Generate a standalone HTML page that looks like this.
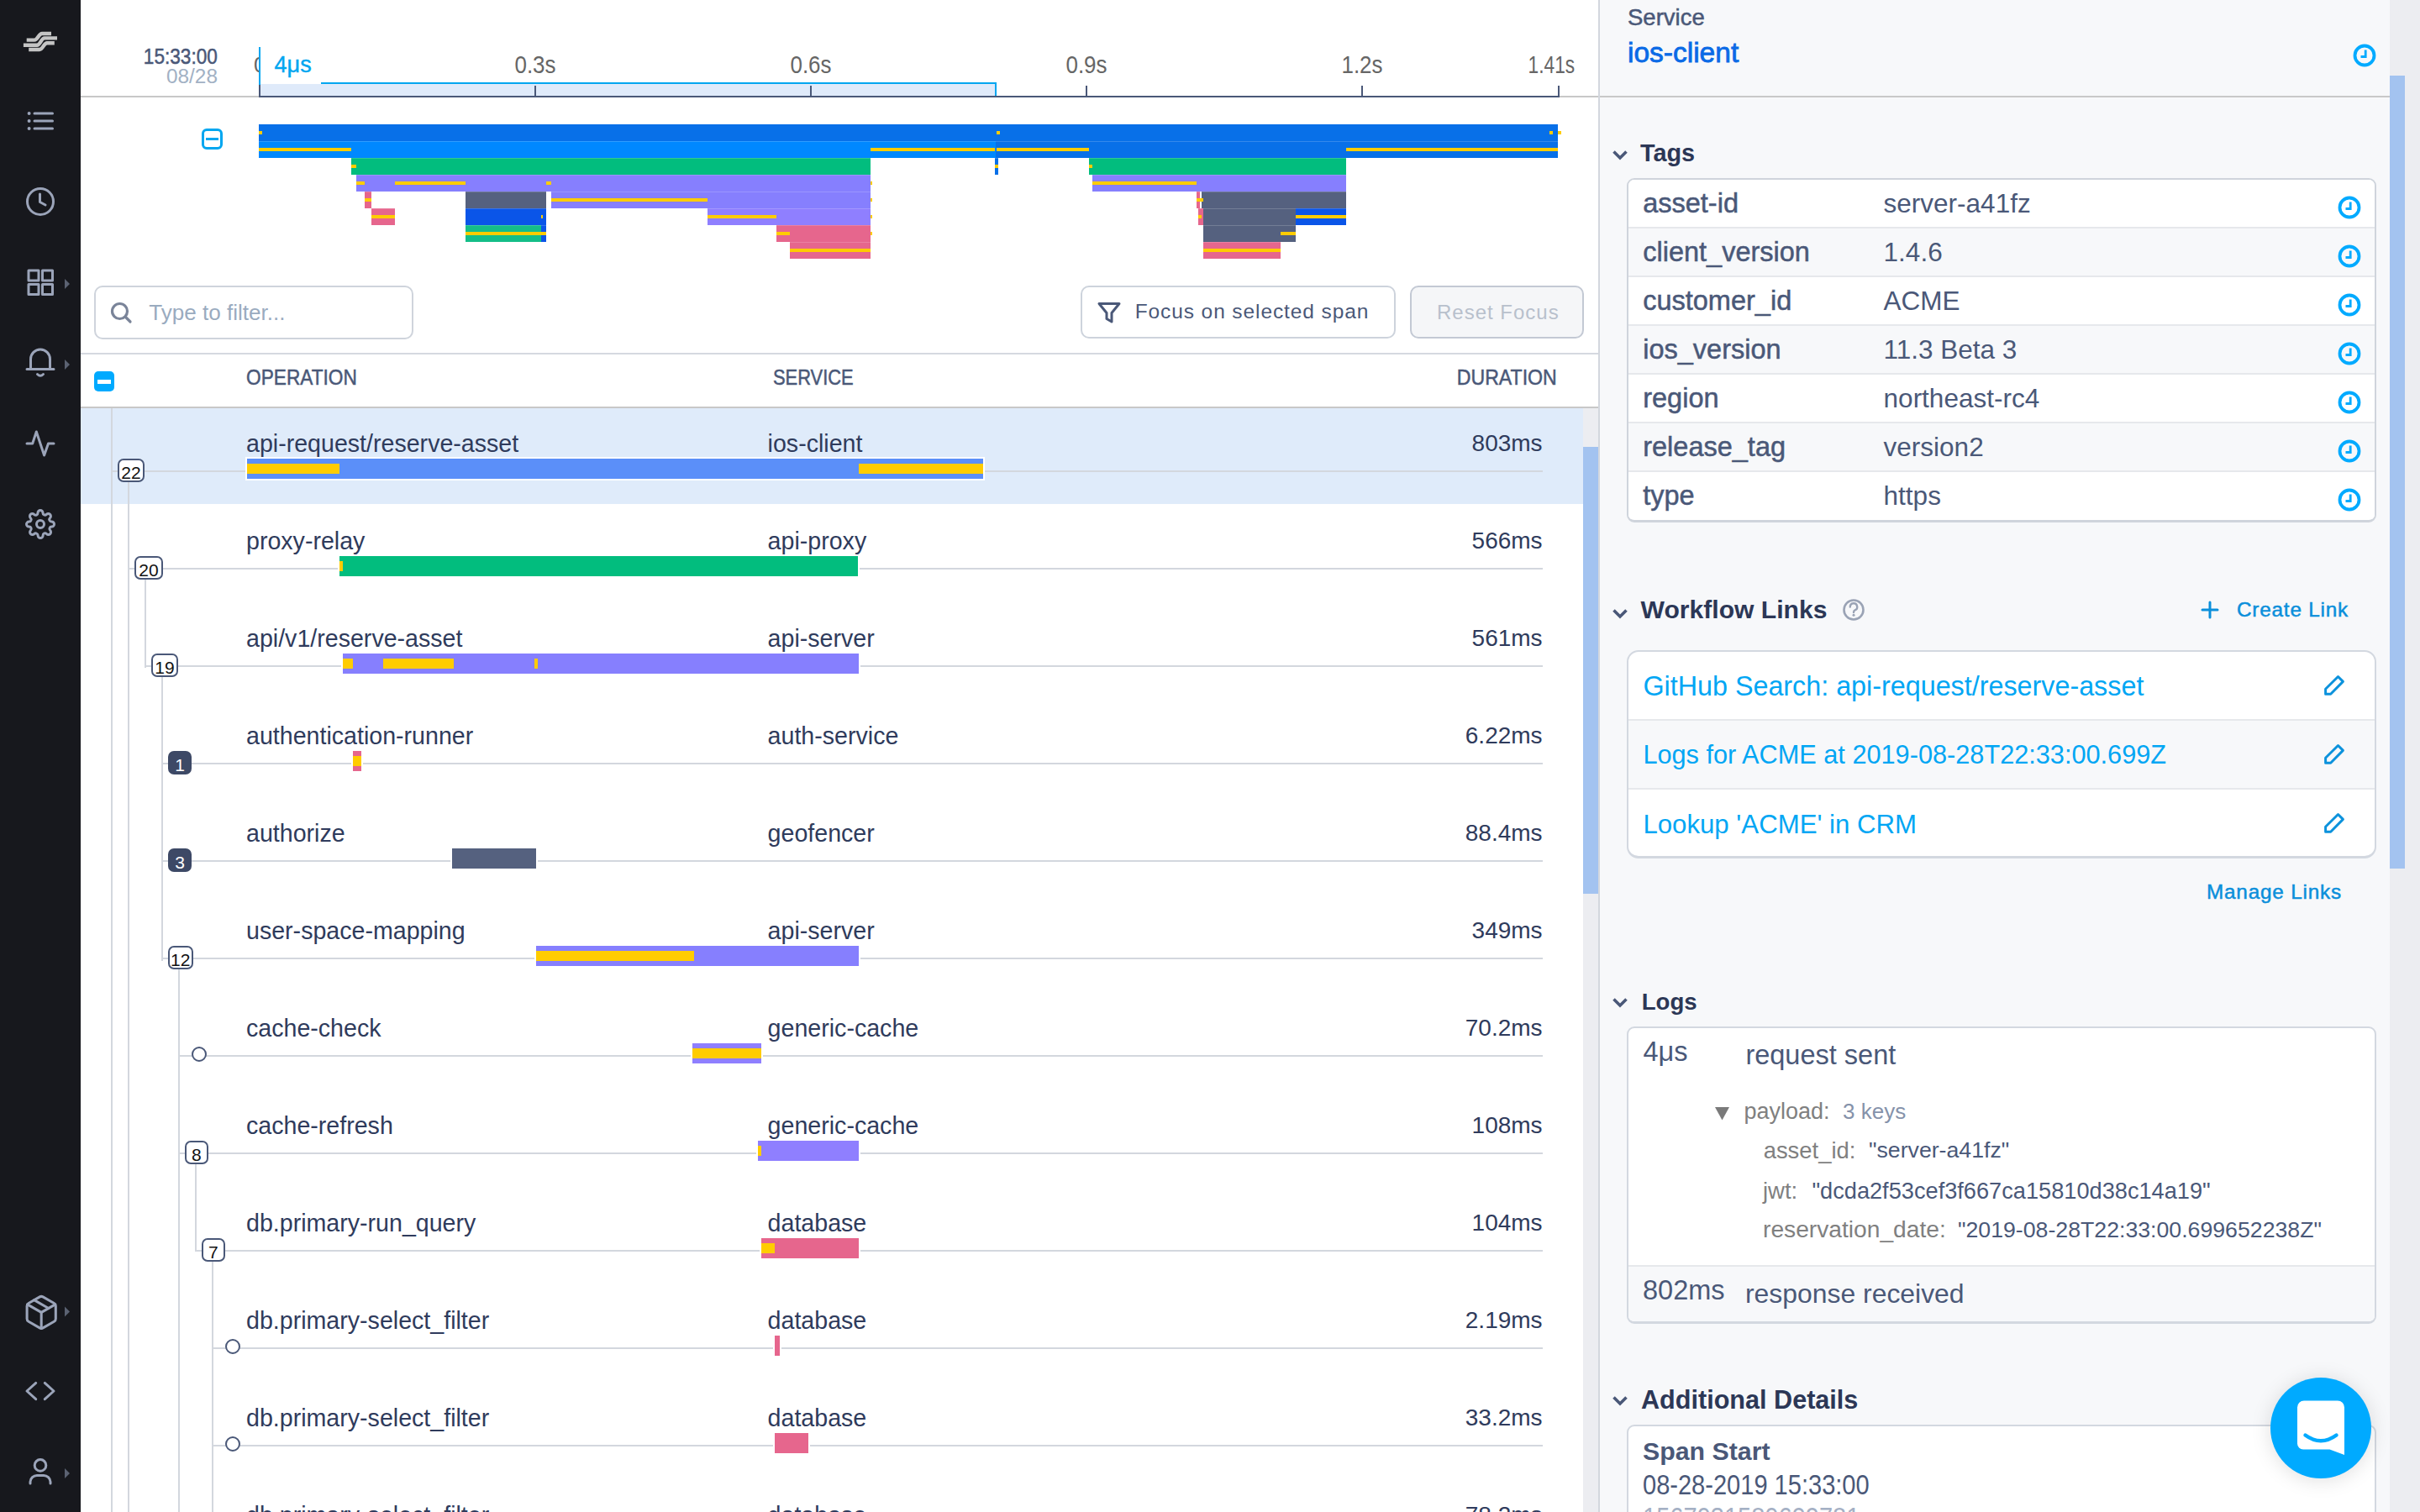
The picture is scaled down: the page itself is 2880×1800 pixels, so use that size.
<!DOCTYPE html>
<html><head><meta charset="utf-8"><title>Trace</title>
<style>
html,body{margin:0;padding:0;width:2880px;height:1800px;overflow:hidden;background:#fff;}
@media (max-width:2000px){html{zoom:0.5;}}
body{position:relative;font-family:"Liberation Sans", sans-serif;}
body div, body svg{position:absolute;box-sizing:content-box;}
.t{white-space:nowrap;line-height:1;}
.bdg{height:23.5px;border:2px solid #4a5878;border-radius:7px;background:#fff;color:#111;font-size:21px;line-height:30px;text-align:center;}
</style></head><body>
<div style="left:0px;top:0px;width:96px;height:1800px;background:#17181d;"></div><div style="left:96px;top:0px;width:1806px;height:1800px;background:#ffffff;"></div><div style="left:1902px;top:0px;width:2px;height:1800px;background:#d3d7de;"></div><div style="left:1904px;top:0px;width:940px;height:1800px;background:#f7f8fa;"></div><div style="left:2844px;top:0px;width:36px;height:1800px;background:#ecedf1;"></div><div style="left:2844px;top:90px;width:18px;height:944px;background:#a3c3f0;"></div><svg style="left:0;top:0" width="96" height="1800" viewBox="0 0 96 1800"><g fill="none" stroke="#c4c4c4" stroke-width="4.4"><path d="M31.7 47.6 H41 C45 47.6 46 40 50 40 H61"/><path d="M27.9 53.7 H44 C48 53.7 49 45.4 53 45.4 H68"/><path d="M34.2 59 H47 C51 59 52 51.2 56 51.2 H64.8"/></g><g fill="none" stroke="#9ba4b9" stroke-width="3" stroke-linecap="round" stroke-linejoin="round"><path d="M41 135 H62.5 M41 144 H62.5 M41 153 H62.5"/><circle cx="48" cy="240" r="15.5"/><path d="M47.5 231 V240.5 L54 244"/><rect x="34" y="322" width="12" height="12" stroke-linecap="butt"/><rect x="50.5" y="322" width="12" height="12"/><rect x="34" y="338.5" width="12" height="12"/><rect x="50.5" y="338.5" width="12" height="12"/><path d="M32 439.5 H64 M36.5 439.5 V427.5 A11.5 11.5 0 0 1 59.5 427.5 V439.5 M44.5 445.5 Q48 449 51.5 445.5"/><path d="M32 528 H38.7 L43.3 514 L52.6 542 L57.5 528 H64"/><path d="M42.7 1646.4 L32 1656 L42.7 1665.7 M53.3 1646.4 L64 1656 L53.3 1665.7"/><circle cx="48" cy="1744.4" r="6.8"/><path d="M36 1766 V1764 A8 8 0 0 1 44 1756.5 H52 A8 8 0 0 1 60 1764 V1766"/></g><g fill="#9ba4b9"><circle cx="34.6" cy="135" r="2"/><circle cx="34.6" cy="144" r="2"/><circle cx="34.6" cy="153" r="2"/></g><g transform="translate(30,606) scale(1.5)" fill="none" stroke="#9ba4b9" stroke-width="2" stroke-linecap="round" stroke-linejoin="round"><circle cx="12" cy="12" r="3"/><path d="M19.4 15a1.650 1.65 0 0 0 .33 1.82l.06.06a2 2 0 0 1 0 2.83 2 2 0 0 1-2.830 0l-.06-.06a1.65 1.65 0 0 0-1.82-.33 1.65 1.65 0 0 0-1 1.51V21a2 2 0 0 1-2 2 2 2 0 0 1-2-2v-.09A1.65 1.65 0 0 0 9 19.4a1.65 1.65 0 0 0-1.82.33l-.06.06a2 2 0 0 1-2.83 0 2 2 0 0 1 0-2.83l.06-.06a1.65 1.65 0 0 0 .33-1.82 1.65 1.65 0 0 0-1.51-1H3a2 2 0 0 1-2-2 2 2 0 0 1 2-2h.09A1.65 1.65 0 0 0 4.6 9a1.65 1.65 0 0 0-.33-1.82l-.06-.06a2 2 0 0 1 0-2.83 2 2 0 0 1 2.83 0l.06.06a1.65 1.65 0 0 0 1.82.33H9a1.65 1.65 0 0 0 1-1.51V3a2 2 0 0 1 2-2 2 2 0 0 1 2 2v.09a1.65 1.650 0 0 0 1 1.51 1.65 1.65 0 0 0 1.82-.33l.06-.06a2 2 0 0 1 2.83 0 2 2 0 0 1 0 2.83l-.06.06a1.65 1.65 0 0 0-.33 1.82V9a1.65 1.65 0 0 0 1.51 1H21a2 2 0 0 1 2 2 2 2 0 0 1-2 2h-.09a1.65 1.65 0 0 0-1.51 1z"/></g><g transform="translate(26.4,1539.6) scale(1.9)" fill="none" stroke="#9ba4b9" stroke-width="1.6" stroke-linecap="round" stroke-linejoin="round"><line x1="16.5" y1="9.4" x2="7.5" y2="4.21"/><path d="M21 16V8a2 2 0 0 0-1-1.73l-7-4a2 2 0 0 0-2 0l-7 4A2 2 0 0 0 3 8v8a2 2 0 0 0 1 1.73l7 4a2 2 0 0 0 2 0l7-4A2 2 0 0 0 21 16z"/><polyline points="3.27 6.96 12 12.01 20.73 6.96"/><line x1="12" y1="22.08" x2="12" y2="12"/></g><path d="M77 332 L83 338 L77 344 Z" fill="#5b6272"/><path d="M77 428 L83 434 L77 440 Z" fill="#5b6272"/><path d="M77 1555.5 L83 1561.5 L77 1567.5 Z" fill="#5b6272"/><path d="M77 1748 L83 1754 L77 1760 Z" fill="#5b6272"/></svg><div class="t" style="right:2621px;top:54.9px;font-size:25.4px;color:#4a5878;transform:scaleX(0.89);transform-origin:right center;-webkit-text-stroke:0.5px #4a5878;">15:33:00</div><div class="t" style="right:2621px;top:79.35px;font-size:24.4px;color:#a2b1c4;">08/28</div><div style="left:96px;top:114px;width:212px;height:2px;background:#c8c8c8;"></div><div style="left:1856px;top:114px;width:46px;height:2px;background:#c8c8c8;"></div><div style="left:1904px;top:114px;width:940px;height:2px;background:#c8c8c8;"></div><div style="left:308px;top:100px;width:876px;height:14px;background:#dfeafa;"></div><div style="left:382px;top:98px;width:804px;height:2px;background:#00a6f0;"></div><div style="left:1184px;top:98px;width:2px;height:16px;background:#00a6f0;"></div><div style="left:308px;top:114px;width:1548px;height:2px;background:#4a5878;"></div><div style="left:308px;top:56px;width:2px;height:45px;background:#00a6f0;"></div><div style="left:308px;top:101px;width:2px;height:15px;background:#4a5878;"></div><div class="t" style="left:302px;top:64.49px;font-size:26px;color:#666666;width:6px;overflow:hidden;">0</div><div class="t" style="left:326.6px;top:63.64px;font-size:27px;color:#00a6f0;-webkit-text-stroke:0.4px #00a6f0;">4μs</div><div style="left:636px;top:102px;width:2px;height:12px;background:#4a5878;"></div><div class="t" style="left:576.7px;width:120px;text-align:center;top:61.53px;font-size:29.5px;color:#666666;transform:scaleX(0.88)">0.3s</div><div style="left:964px;top:102px;width:2px;height:12px;background:#4a5878;"></div><div class="t" style="left:904.8px;width:120px;text-align:center;top:61.53px;font-size:29.5px;color:#666666;transform:scaleX(0.88)">0.6s</div><div style="left:1292px;top:102px;width:2px;height:12px;background:#4a5878;"></div><div class="t" style="left:1232.9px;width:120px;text-align:center;top:61.53px;font-size:29.5px;color:#666666;transform:scaleX(0.88)">0.9s</div><div style="left:1620px;top:102px;width:2px;height:12px;background:#4a5878;"></div><div class="t" style="left:1560.8px;width:120px;text-align:center;top:61.53px;font-size:29.5px;color:#666666;transform:scaleX(0.88)">1.2s</div><div style="left:1854px;top:102px;width:2px;height:12px;background:#4a5878;"></div><div class="t" style="right:1006px;top:61.53px;font-size:29.5px;color:#666666;transform:scaleX(0.77);transform-origin:right center;">1.41s</div><div style="left:240px;top:153px;width:19px;height:19px;border:3px solid #00a6f0;border-radius:6px"></div><div style="left:245px;top:164px;width:15px;height:3px;background:#00a6f0;"></div><div style="left:308px;top:148px;width:1546px;height:20px;background:#0870e8;"></div><div style="left:308px;top:156px;width:4px;height:4px;background:#ffcc00;"></div><div style="left:1186px;top:156px;width:4px;height:4px;background:#ffcc00;"></div><div style="left:1844px;top:156px;width:4px;height:4px;background:#ffcc00;"></div><div style="left:1854px;top:156px;width:4px;height:4px;background:#ffcc00;"></div><div style="left:308px;top:168px;width:877px;height:20px;background:#0088ff;box-shadow:inset 0 1px 0 rgba(255,255,255,0.18);"></div><div style="left:1185px;top:168px;width:669px;height:20px;background:#0870e8;box-shadow:inset 0 1px 0 rgba(255,255,255,0.18);"></div><div style="left:308px;top:176px;width:110px;height:4px;background:#ffcc00;"></div><div style="left:1036px;top:176px;width:148px;height:4px;background:#ffcc00;"></div><div style="left:1186px;top:176px;width:110px;height:4px;background:#ffcc00;"></div><div style="left:1602px;top:176px;width:252px;height:4px;background:#ffcc00;"></div><div style="left:418px;top:188px;width:618px;height:20px;background:#02bd7e;box-shadow:inset 0 1px 0 rgba(255,255,255,0.18);"></div><div style="left:1184px;top:188px;width:4px;height:20px;background:#0870e8;box-shadow:inset 0 1px 0 rgba(255,255,255,0.18);"></div><div style="left:1296px;top:188px;width:306px;height:20px;background:#02bd7e;box-shadow:inset 0 1px 0 rgba(255,255,255,0.18);"></div><div style="left:418px;top:196px;width:6px;height:4px;background:#ffcc00;"></div><div style="left:1184px;top:196px;width:4px;height:4px;background:#ffcc00;"></div><div style="left:1296px;top:196px;width:4px;height:4px;background:#ffcc00;"></div><div style="left:424px;top:208px;width:612px;height:20px;background:#867ffe;box-shadow:inset 0 1px 0 rgba(255,255,255,0.18);"></div><div style="left:1300px;top:208px;width:302px;height:20px;background:#867ffe;box-shadow:inset 0 1px 0 rgba(255,255,255,0.18);"></div><div style="left:424px;top:216px;width:10px;height:4px;background:#ffcc00;"></div><div style="left:470px;top:216px;width:84px;height:4px;background:#ffcc00;"></div><div style="left:650px;top:216px;width:6px;height:4px;background:#ffcc00;"></div><div style="left:1036px;top:216px;width:2px;height:4px;background:#ffcc00;"></div><div style="left:1300px;top:216px;width:124px;height:4px;background:#ffcc00;"></div><div style="left:434px;top:228px;width:8px;height:20px;background:#e6668d;box-shadow:inset 0 1px 0 rgba(255,255,255,0.18);"></div><div style="left:554px;top:228px;width:96px;height:20px;background:#55617f;box-shadow:inset 0 1px 0 rgba(255,255,255,0.18);"></div><div style="left:656px;top:228px;width:380px;height:20px;background:#867ffe;box-shadow:inset 0 1px 0 rgba(255,255,255,0.18);"></div><div style="left:1424px;top:228px;width:4px;height:20px;background:#e6668d;box-shadow:inset 0 1px 0 rgba(255,255,255,0.18);"></div><div style="left:1430px;top:228px;width:172px;height:20px;background:#55617f;box-shadow:inset 0 1px 0 rgba(255,255,255,0.18);"></div><div style="left:434px;top:236px;width:8px;height:4px;background:#ffcc00;"></div><div style="left:656px;top:236px;width:186px;height:4px;background:#ffcc00;"></div><div style="left:1036px;top:236px;width:2px;height:4px;background:#ffcc00;"></div><div style="left:1424px;top:236px;width:8px;height:4px;background:#ffcc00;"></div><div style="left:442px;top:248px;width:28px;height:20px;background:#e6668d;box-shadow:inset 0 1px 0 rgba(255,255,255,0.18);"></div><div style="left:554px;top:248px;width:96px;height:20px;background:#0a55e8;box-shadow:inset 0 1px 0 rgba(255,255,255,0.18);"></div><div style="left:842px;top:248px;width:194px;height:20px;background:#8f7fff;box-shadow:inset 0 1px 0 rgba(255,255,255,0.18);"></div><div style="left:1426px;top:248px;width:6px;height:20px;background:#e6668d;box-shadow:inset 0 1px 0 rgba(255,255,255,0.18);"></div><div style="left:1432px;top:248px;width:110px;height:20px;background:#55617f;box-shadow:inset 0 1px 0 rgba(255,255,255,0.18);"></div><div style="left:1542px;top:248px;width:60px;height:20px;background:#0a55e8;box-shadow:inset 0 1px 0 rgba(255,255,255,0.18);"></div><div style="left:442px;top:256px;width:28px;height:4px;background:#ffcc00;"></div><div style="left:644px;top:256px;width:2px;height:4px;background:#ffcc00;"></div><div style="left:842px;top:256px;width:82px;height:4px;background:#ffcc00;"></div><div style="left:1036px;top:256px;width:2px;height:4px;background:#ffcc00;"></div><div style="left:1426px;top:256px;width:4px;height:4px;background:#ffcc00;"></div><div style="left:1542px;top:256px;width:60px;height:4px;background:#ffcc00;"></div><div style="left:554px;top:268px;width:90px;height:20px;background:#14be88;box-shadow:inset 0 1px 0 rgba(255,255,255,0.18);"></div><div style="left:644px;top:268px;width:6px;height:20px;background:#0a55e8;box-shadow:inset 0 1px 0 rgba(255,255,255,0.18);"></div><div style="left:924px;top:268px;width:112px;height:20px;background:#e6668d;box-shadow:inset 0 1px 0 rgba(255,255,255,0.18);"></div><div style="left:1432px;top:268px;width:110px;height:20px;background:#55617f;box-shadow:inset 0 1px 0 rgba(255,255,255,0.18);"></div><div style="left:554px;top:276px;width:96px;height:4px;background:#ffcc00;"></div><div style="left:924px;top:276px;width:16px;height:4px;background:#ffcc00;"></div><div style="left:1036px;top:276px;width:2px;height:4px;background:#ffcc00;"></div><div style="left:1524px;top:276px;width:18px;height:4px;background:#ffcc00;"></div><div style="left:940px;top:288px;width:96px;height:20px;background:#e6668d;box-shadow:inset 0 1px 0 rgba(255,255,255,0.18);"></div><div style="left:1432px;top:288px;width:92px;height:20px;background:#e6668d;box-shadow:inset 0 1px 0 rgba(255,255,255,0.18);"></div><div style="left:940px;top:296px;width:96px;height:4px;background:#ffcc00;"></div><div style="left:1432px;top:296px;width:92px;height:4px;background:#ffcc00;"></div><div style="left:112px;top:340px;width:376px;height:60px;border:2px solid #cfd4dc;border-radius:10px;background:#fff"></div><svg style="left:128px;top:356px" width="32" height="32" viewBox="128 356 32 32"><g fill="none" stroke="#7a8499" stroke-width="3.2" stroke-linecap="round"><circle cx="142.5" cy="370.5" r="9"/><path d="M149.5 377.5 L155 383"/></g></svg><div class="t" style="left:177.2px;top:358.61px;font-size:26.1px;color:#9aabbf;">Type to filter...</div><div style="left:1286px;top:340px;width:371px;height:59px;border:2px solid #cdd3dc;border-radius:10px;background:#fff"></div><svg style="left:1300px;top:354px" width="40" height="36" viewBox="1300 354 40 36"><path d="M1308 361.5 H1332 L1323 372.5 V383 L1317 379.5 V372.5 Z" fill="none" stroke="#4a5878" stroke-width="3" stroke-linejoin="round"/></svg><div class="t" style="left:1350.7px;top:359.26px;font-size:24.5px;color:#4a5878;letter-spacing:0.9px;">Focus on selected span</div><div style="left:1678px;top:340px;width:203px;height:59px;border:2px solid #c3c9d4;border-radius:10px;background:#f5f6f8"></div><div class="t" style="left:1710px;top:359.68px;font-size:24px;color:#b8c0cc;letter-spacing:1.0px;">Reset Focus</div><div style="left:96px;top:420px;width:1806px;height:2px;background:#d5d9e0;"></div><div style="left:112px;top:442px;width:24px;height:24px;border-radius:5px;background:#00aaff"></div><div style="left:116px;top:452px;width:16px;height:5px;background:#ffffff;"></div><div class="t" style="left:292.6px;top:437.3px;font-size:25.4px;color:#4a5878;transform:scaleX(0.893);transform-origin:left center;-webkit-text-stroke:0.5px #4a5878;">OPERATION</div><div class="t" style="left:919.8px;top:437.3px;font-size:25.4px;color:#4a5878;transform:scaleX(0.862);transform-origin:left center;-webkit-text-stroke:0.5px #4a5878;">SERVICE</div><div class="t" style="right:1027px;top:437.3px;font-size:25.4px;color:#4a5878;transform:scaleX(0.91);transform-origin:right center;-webkit-text-stroke:0.5px #4a5878;">DURATION</div><div style="left:96px;top:484px;width:1806px;height:2px;background:#c8c8c8;"></div><div style="left:96px;top:486px;width:1788px;height:114px;background:#dfebfa;"></div><div style="left:132px;top:486px;width:2px;height:1314px;background:#d3d7de;"></div><div style="left:152px;top:574px;width:2px;height:1226px;background:#d3d7de;"></div><div style="left:172px;top:690px;width:2px;height:105px;background:#d3d7de;"></div><div style="left:192px;top:805px;width:2px;height:339px;background:#d3d7de;"></div><div style="left:212px;top:1153px;width:2px;height:647px;background:#d3d7de;"></div><div style="left:232px;top:1385px;width:2px;height:105px;background:#d3d7de;"></div><div style="left:252px;top:1501px;width:2px;height:299px;background:#d3d7de;"></div><div style="left:132px;top:560px;width:1704px;height:2px;background:#d3d7de;"></div><div class="bdg" style="left:140px;top:546px;width:28px">22</div><div style="left:294px;top:546px;width:876px;height:24px;background:#5b8ff9;box-shadow:0 0 0 2px #fff;"></div><div style="left:294px;top:552px;width:110px;height:12px;background:#ffcc00;"></div><div style="left:1022px;top:552px;width:148px;height:12px;background:#ffcc00;"></div><div class="t" style="left:293px;top:513.79px;font-size:28.6px;color:#2f3b5c;">api-request/reserve-asset</div><div class="t" style="left:913.6px;top:513.79px;font-size:28.6px;color:#2f3b5c;">ios-client</div><div class="t" style="right:1044.4px;top:514.3px;font-size:28px;color:#2f3b5c;">803ms</div><div style="left:152px;top:676px;width:1684px;height:2px;background:#d3d7de;"></div><div class="bdg" style="left:160px;top:662px;width:30px">20</div><div style="left:404px;top:662px;width:617px;height:24px;background:#02bd7e;box-shadow:0 0 0 2px #fff;"></div><div style="left:404px;top:668px;width:4px;height:12px;background:#ffcc00;"></div><div class="t" style="left:293px;top:629.79px;font-size:28.6px;color:#2f3b5c;">proxy-relay</div><div class="t" style="left:913.6px;top:629.79px;font-size:28.6px;color:#2f3b5c;">api-proxy</div><div class="t" style="right:1044.4px;top:630.3px;font-size:28px;color:#2f3b5c;">566ms</div><div style="left:172px;top:792px;width:1664px;height:2px;background:#d3d7de;"></div><div class="bdg" style="left:180px;top:778px;width:28px">19</div><div style="left:408px;top:778px;width:614px;height:24px;background:#867ffe;box-shadow:0 0 0 2px #fff;"></div><div style="left:408px;top:784px;width:12px;height:12px;background:#ffcc00;"></div><div style="left:456px;top:784px;width:84px;height:12px;background:#ffcc00;"></div><div style="left:636px;top:784px;width:4px;height:12px;background:#ffcc00;"></div><div class="t" style="left:293px;top:745.79px;font-size:28.6px;color:#2f3b5c;">api/v1/reserve-asset</div><div class="t" style="left:913.6px;top:745.79px;font-size:28.6px;color:#2f3b5c;">api-server</div><div class="t" style="right:1044.4px;top:746.3px;font-size:28px;color:#2f3b5c;">561ms</div><div style="left:192px;top:908px;width:1644px;height:2px;background:#d3d7de;"></div><div class="bdg" style="left:200px;top:894px;width:24px;background:#3d4966;border-color:#3d4966;color:#fff">1</div><div style="left:420px;top:894px;width:10px;height:24px;background:#e6668d;box-shadow:0 0 0 2px #fff;"></div><div style="left:420px;top:900px;width:10px;height:12px;background:#ffcc00;"></div><div class="t" style="left:293px;top:861.79px;font-size:28.6px;color:#2f3b5c;">authentication-runner</div><div class="t" style="left:913.6px;top:861.79px;font-size:28.6px;color:#2f3b5c;">auth-service</div><div class="t" style="right:1044.4px;top:862.3px;font-size:28px;color:#2f3b5c;">6.22ms</div><div style="left:192px;top:1024px;width:1644px;height:2px;background:#d3d7de;"></div><div class="bdg" style="left:200px;top:1010px;width:24px;background:#3d4966;border-color:#3d4966;color:#fff">3</div><div style="left:538px;top:1010px;width:100px;height:24px;background:#55617f;box-shadow:0 0 0 2px #fff;"></div><div class="t" style="left:293px;top:977.79px;font-size:28.6px;color:#2f3b5c;">authorize</div><div class="t" style="left:913.6px;top:977.79px;font-size:28.6px;color:#2f3b5c;">geofencer</div><div class="t" style="right:1044.4px;top:978.3px;font-size:28px;color:#2f3b5c;">88.4ms</div><div style="left:192px;top:1140px;width:1644px;height:2px;background:#d3d7de;"></div><div class="bdg" style="left:200px;top:1126px;width:25.5px">12</div><div style="left:638px;top:1126px;width:384px;height:24px;background:#867ffe;box-shadow:0 0 0 2px #fff;"></div><div style="left:638px;top:1132px;width:188px;height:12px;background:#ffcc00;"></div><div class="t" style="left:293px;top:1093.79px;font-size:28.6px;color:#2f3b5c;">user-space-mapping</div><div class="t" style="left:913.6px;top:1093.79px;font-size:28.6px;color:#2f3b5c;">api-server</div><div class="t" style="right:1044.4px;top:1094.3px;font-size:28px;color:#2f3b5c;">349ms</div><div style="left:212px;top:1256px;width:1624px;height:2px;background:#d3d7de;"></div><div style="left:228px;top:1246px;width:14px;height:14px;border:2px solid #4a5878;border-radius:50%;background:#fff"></div><div style="left:824px;top:1242px;width:82px;height:24px;background:#8f7fff;box-shadow:0 0 0 2px #fff;"></div><div style="left:824px;top:1248px;width:82px;height:12px;background:#ffcc00;"></div><div class="t" style="left:293px;top:1209.79px;font-size:28.6px;color:#2f3b5c;">cache-check</div><div class="t" style="left:913.6px;top:1209.79px;font-size:28.6px;color:#2f3b5c;">generic-cache</div><div class="t" style="right:1044.4px;top:1210.3px;font-size:28px;color:#2f3b5c;">70.2ms</div><div style="left:212px;top:1372px;width:1624px;height:2px;background:#d3d7de;"></div><div class="bdg" style="left:220px;top:1358px;width:23.5px">8</div><div style="left:902px;top:1358px;width:120px;height:24px;background:#8f7fff;box-shadow:0 0 0 2px #fff;"></div><div style="left:902px;top:1364px;width:4px;height:12px;background:#ffcc00;"></div><div class="t" style="left:293px;top:1325.79px;font-size:28.6px;color:#2f3b5c;">cache-refresh</div><div class="t" style="left:913.6px;top:1325.79px;font-size:28.6px;color:#2f3b5c;">generic-cache</div><div class="t" style="right:1044.4px;top:1326.3px;font-size:28px;color:#2f3b5c;">108ms</div><div style="left:232px;top:1488px;width:1604px;height:2px;background:#d3d7de;"></div><div class="bdg" style="left:240px;top:1474px;width:23.5px">7</div><div style="left:906px;top:1474px;width:116px;height:24px;background:#e6668d;box-shadow:0 0 0 2px #fff;"></div><div style="left:906px;top:1480px;width:16px;height:12px;background:#ffcc00;"></div><div class="t" style="left:293px;top:1441.79px;font-size:28.6px;color:#2f3b5c;">db.primary-run_query</div><div class="t" style="left:913.6px;top:1441.79px;font-size:28.6px;color:#2f3b5c;">database</div><div class="t" style="right:1044.4px;top:1442.3px;font-size:28px;color:#2f3b5c;">104ms</div><div style="left:252px;top:1604px;width:1584px;height:2px;background:#d3d7de;"></div><div style="left:267.5px;top:1594px;width:14px;height:14px;border:2px solid #4a5878;border-radius:50%;background:#fff"></div><div style="left:922px;top:1590px;width:6px;height:24px;background:#e6668d;box-shadow:0 0 0 2px #fff;"></div><div class="t" style="left:293px;top:1557.79px;font-size:28.6px;color:#2f3b5c;">db.primary-select_filter</div><div class="t" style="left:913.6px;top:1557.79px;font-size:28.6px;color:#2f3b5c;">database</div><div class="t" style="right:1044.4px;top:1558.3px;font-size:28px;color:#2f3b5c;">2.19ms</div><div style="left:252px;top:1720px;width:1584px;height:2px;background:#d3d7de;"></div><div style="left:267.5px;top:1710px;width:14px;height:14px;border:2px solid #4a5878;border-radius:50%;background:#fff"></div><div style="left:922px;top:1706px;width:40px;height:24px;background:#e6668d;box-shadow:0 0 0 2px #fff;"></div><div class="t" style="left:293px;top:1673.79px;font-size:28.6px;color:#2f3b5c;">db.primary-select_filter</div><div class="t" style="left:913.6px;top:1673.79px;font-size:28.6px;color:#2f3b5c;">database</div><div class="t" style="right:1044.4px;top:1674.3px;font-size:28px;color:#2f3b5c;">33.2ms</div><div style="left:252px;top:1836px;width:1584px;height:2px;background:#d3d7de;"></div><div style="left:267.5px;top:1826px;width:14px;height:14px;border:2px solid #4a5878;border-radius:50%;background:#fff"></div><div style="left:922px;top:1822px;width:84px;height:24px;background:#e6668d;box-shadow:0 0 0 2px #fff;"></div><div class="t" style="left:293px;top:1789.79px;font-size:28.6px;color:#2f3b5c;">db.primary-select_filter</div><div class="t" style="left:913.6px;top:1789.79px;font-size:28.6px;color:#2f3b5c;">database</div><div class="t" style="right:1044.4px;top:1790.3px;font-size:28px;color:#2f3b5c;">78.2ms</div><div style="left:1884px;top:486px;width:18px;height:1314px;background:#ecedf1;"></div><div style="left:1884px;top:532px;width:18px;height:532px;background:#a3c3f0;"></div><div class="t" style="left:1937px;top:7.32px;font-size:27.5px;color:#4a5878;-webkit-text-stroke:0.5px #4a5878;">Service</div><div class="t" style="left:1937px;top:45.94px;font-size:33.5px;color:#0a6ae6;-webkit-text-stroke:0.8px #0a6ae6;">ios-client</div><svg style="left:2799.3px;top:51.400000000000006px" width="30" height="30" viewBox="2799.3 51.400000000000006 30 30"><g fill="none" stroke="#00aaff" stroke-width="3.8"><circle cx="2814.3" cy="66.4" r="11.5"/><path d="M2815.5 59.900000000000006 V67.9 H2809.8" stroke-width="2.8"/></g></svg><svg style="left:1915px;top:172.5px" width="26" height="24" viewBox="1915 172.5 26 24"><path d="M1920.5 180.0 L1928 187.5 L1935.5 180.0" fill="none" stroke="#4a5878" stroke-width="3.6"/></svg><div class="t" style="left:1952px;top:167.62px;font-size:28.8px;color:#2c3756;font-weight:700;">Tags</div><div style="left:1936px;top:212px;width:888px;height:405px;border:2px solid #cfd4dc;border-bottom-width:3px;border-radius:9px;background:#fff;overflow:hidden"><div style="left:0;top:0px;width:888px;height:56px;background:#fff;box-sizing:border-box"></div><div style="left:0;top:56px;width:888px;height:58px;background:#f7f8fa;border-top:2px solid #e6e8ec;box-sizing:border-box"></div><div style="left:0;top:114px;width:888px;height:58px;background:#fff;border-top:2px solid #e6e8ec;box-sizing:border-box"></div><div style="left:0;top:172px;width:888px;height:58px;background:#f7f8fa;border-top:2px solid #e6e8ec;box-sizing:border-box"></div><div style="left:0;top:230px;width:888px;height:58px;background:#fff;border-top:2px solid #e6e8ec;box-sizing:border-box"></div><div style="left:0;top:288px;width:888px;height:58px;background:#f7f8fa;border-top:2px solid #e6e8ec;box-sizing:border-box"></div><div style="left:0;top:346px;width:888px;height:58px;background:#fff;border-top:2px solid #e6e8ec;box-sizing:border-box"></div></div><div class="t" style="left:1955.2px;top:226.19px;font-size:32.5px;color:#4a5878;-webkit-text-stroke:0.5px #4a5878;">asset-id</div><div class="t" style="left:2241.6px;top:227.04px;font-size:31.5px;color:#4a5878;">server-a41fz</div><svg style="left:2781px;top:231.5px" width="30" height="30" viewBox="2781 231.5 30 30"><g fill="none" stroke="#00aaff" stroke-width="3.8"><circle cx="2796" cy="246.5" r="11.5"/><path d="M2797.2 240.0 V248.0 H2791.5" stroke-width="2.8"/></g></svg><div class="t" style="left:1955.2px;top:284.19px;font-size:32.5px;color:#4a5878;-webkit-text-stroke:0.5px #4a5878;">client_version</div><div class="t" style="left:2241.6px;top:285.04px;font-size:31.5px;color:#4a5878;">1.4.6</div><svg style="left:2781px;top:289.5px" width="30" height="30" viewBox="2781 289.5 30 30"><g fill="none" stroke="#00aaff" stroke-width="3.8"><circle cx="2796" cy="304.5" r="11.5"/><path d="M2797.2 298.0 V306.0 H2791.5" stroke-width="2.8"/></g></svg><div class="t" style="left:1955.2px;top:342.19px;font-size:32.5px;color:#4a5878;-webkit-text-stroke:0.5px #4a5878;">customer_id</div><div class="t" style="left:2241.6px;top:343.04px;font-size:31.5px;color:#4a5878;">ACME</div><svg style="left:2781px;top:347.5px" width="30" height="30" viewBox="2781 347.5 30 30"><g fill="none" stroke="#00aaff" stroke-width="3.8"><circle cx="2796" cy="362.5" r="11.5"/><path d="M2797.2 356.0 V364.0 H2791.5" stroke-width="2.8"/></g></svg><div class="t" style="left:1955.2px;top:400.19px;font-size:32.5px;color:#4a5878;-webkit-text-stroke:0.5px #4a5878;">ios_version</div><div class="t" style="left:2241.6px;top:401.04px;font-size:31.5px;color:#4a5878;">11.3 Beta 3</div><svg style="left:2781px;top:405.5px" width="30" height="30" viewBox="2781 405.5 30 30"><g fill="none" stroke="#00aaff" stroke-width="3.8"><circle cx="2796" cy="420.5" r="11.5"/><path d="M2797.2 414.0 V422.0 H2791.5" stroke-width="2.8"/></g></svg><div class="t" style="left:1955.2px;top:458.19px;font-size:32.5px;color:#4a5878;-webkit-text-stroke:0.5px #4a5878;">region</div><div class="t" style="left:2241.6px;top:459.04px;font-size:31.5px;color:#4a5878;">northeast-rc4</div><svg style="left:2781px;top:463.5px" width="30" height="30" viewBox="2781 463.5 30 30"><g fill="none" stroke="#00aaff" stroke-width="3.8"><circle cx="2796" cy="478.5" r="11.5"/><path d="M2797.2 472.0 V480.0 H2791.5" stroke-width="2.8"/></g></svg><div class="t" style="left:1955.2px;top:516.19px;font-size:32.5px;color:#4a5878;-webkit-text-stroke:0.5px #4a5878;">release_tag</div><div class="t" style="left:2241.6px;top:517.04px;font-size:31.5px;color:#4a5878;">version2</div><svg style="left:2781px;top:521.5px" width="30" height="30" viewBox="2781 521.5 30 30"><g fill="none" stroke="#00aaff" stroke-width="3.8"><circle cx="2796" cy="536.5" r="11.5"/><path d="M2797.2 530.0 V538.0 H2791.5" stroke-width="2.8"/></g></svg><div class="t" style="left:1955.2px;top:574.19px;font-size:32.5px;color:#4a5878;-webkit-text-stroke:0.5px #4a5878;">type</div><div class="t" style="left:2241.6px;top:575.04px;font-size:31.5px;color:#4a5878;">https</div><svg style="left:2781px;top:579.5px" width="30" height="30" viewBox="2781 579.5 30 30"><g fill="none" stroke="#00aaff" stroke-width="3.8"><circle cx="2796" cy="594.5" r="11.5"/><path d="M2797.2 588.0 V596.0 H2791.5" stroke-width="2.8"/></g></svg><svg style="left:1915px;top:718.5px" width="26" height="24" viewBox="1915 718.5 26 24"><path d="M1920.5 726.0 L1928 733.5 L1935.5 726.0" fill="none" stroke="#4a5878" stroke-width="3.6"/></svg><div class="t" style="left:1952.6px;top:711.02px;font-size:30.1px;color:#2c3756;font-weight:700;">Workflow Links</div><svg style="left:2190px;top:710px" width="32" height="32" viewBox="2190 710 32 32"><circle cx="2206" cy="726" r="11.5" fill="none" stroke="#9aa3b5" stroke-width="2.6"/><path d="M2201.8 722.5 A4.2 4.2 0 1 1 2207.5 726.4 Q2206 727 2206 729" fill="none" stroke="#9aa3b5" stroke-width="2.4" stroke-linecap="round"/><circle cx="2206" cy="732.2" r="1.5" fill="#9aa3b5"/></svg><svg style="left:2616px;top:712px" width="28" height="28" viewBox="2616 712 28 28"><path d="M2630 717 V735 M2621 726 H2639" stroke="#0b8fdb" stroke-width="3" stroke-linecap="round"/></svg><div class="t" style="left:2662px;top:713.93px;font-size:24.3px;color:#0b8fdb;letter-spacing:0.8px;-webkit-text-stroke:0.5px #0b8fdb;">Create Link</div><div style="left:1936px;top:774px;width:888px;height:243px;border:2px solid #d3d8e0;border-bottom-width:3px;border-radius:14px;background:#fff;overflow:hidden"><div style="left:0;top:80px;width:888px;height:84px;background:#f7f8fa;border-top:2px solid #e6e8ec;border-bottom:2px solid #e6e8ec;box-sizing:border-box"></div></div><div class="t" style="left:1955.4px;top:800.66px;font-size:32.3px;color:#00a6f4;">GitHub Search: api-request/reserve-asset</div><svg style="left:2760px;top:801px" width="34" height="32" viewBox="2760 801 34 32"><path d="M2782.5 805.5 L2788.4 811.4 L2773.7 826.3 H2767.6 V820.2 Z" fill="none" stroke="#0c92dc" stroke-width="3" stroke-linejoin="round"/></svg><div class="t" style="left:1955.4px;top:884.01px;font-size:30.7px;color:#00a6f4;">Logs for ACME at 2019-08-28T22:33:00.699Z</div><svg style="left:2760px;top:883px" width="34" height="32" viewBox="2760 883 34 32"><path d="M2782.5 887.5 L2788.4 893.4 L2773.7 908.3 H2767.6 V902.2 Z" fill="none" stroke="#0c92dc" stroke-width="3" stroke-linejoin="round"/></svg><div class="t" style="left:1955.4px;top:965.59px;font-size:31.2px;color:#00a6f4;">Lookup 'ACME' in CRM</div><svg style="left:2760px;top:965px" width="34" height="32" viewBox="2760 965 34 32"><path d="M2782.5 969.5 L2788.4 975.4 L2773.7 990.3 H2767.6 V984.2 Z" fill="none" stroke="#0c92dc" stroke-width="3" stroke-linejoin="round"/></svg><div class="t" style="left:2626px;top:1050.43px;font-size:24.3px;color:#0b8fdb;letter-spacing:0.8px;-webkit-text-stroke:0.5px #0b8fdb;">Manage Links</div><svg style="left:1915px;top:1182px" width="26" height="24" viewBox="1915 1182 26 24"><path d="M1920.5 1189.5 L1928 1197 L1935.5 1189.5" fill="none" stroke="#4a5878" stroke-width="3.6"/></svg><div class="t" style="left:1953.7px;top:1179.04px;font-size:27.6px;color:#2c3756;font-weight:700;">Logs</div><div style="left:1936px;top:1222px;width:888px;height:349px;border:2px solid #d3d8e0;border-bottom-width:3px;border-radius:9px;background:#fff;overflow:hidden"><div style="left:0;top:282px;width:888px;height:72px;background:#f7f8fa;border-top:2px solid #e6e8ec;box-sizing:border-box"></div></div><div class="t" style="left:1955.5px;top:1236.49px;font-size:32.5px;color:#4a5878;">4μs</div><div class="t" style="left:2077.4px;top:1240.49px;font-size:32.5px;color:#4a5878;">request sent</div><svg style="left:2038px;top:1314px" width="24" height="24" viewBox="2038 1314 24 24"><path d="M2041 1318 H2058 L2049.5 1333.5 Z" fill="#7a7a7a"/></svg><div class="t" style="left:2075.4px;top:1309.64px;font-size:27px;color:#808080;">payload:</div><div class="t" style="left:2193px;top:1310.49px;font-size:26px;color:#8592aa;">3 keys</div><div class="t" style="left:2098.7px;top:1355.81px;font-size:27.4px;color:#808080;">asset_id:</div><div class="t" style="left:2224px;top:1356.4px;font-size:26.7px;color:#4a5878;">"server-a41fz"</div><div class="t" style="left:2098px;top:1403.72px;font-size:27.5px;color:#808080;">jwt:</div><div class="t" style="left:2156.4px;top:1403.98px;font-size:27.2px;color:#4a5878;">"dcda2f53cef3f667ca15810d38c14a19"</div><div class="t" style="left:2098px;top:1449.43px;font-size:28.2px;color:#808080;">reservation_date:</div><div class="t" style="left:2330px;top:1450.7px;font-size:26.7px;color:#4a5878;">"2019-08-28T22:33:00.699652238Z"</div><div class="t" style="left:1955px;top:1520.19px;font-size:32.5px;color:#4a5878;">802ms</div><div class="t" style="left:2077px;top:1525.0px;font-size:31.9px;color:#4a5878;">response received</div><svg style="left:1915px;top:1656px" width="26" height="24" viewBox="1915 1656 26 24"><path d="M1920.5 1663.5 L1928 1671 L1935.5 1663.5" fill="none" stroke="#4a5878" stroke-width="3.6"/></svg><div class="t" style="left:1953px;top:1650.7px;font-size:30.6px;color:#2c3756;font-weight:700;">Additional Details</div><div style="left:1936px;top:1696px;width:888px;height:200px;border:2px solid #d3d8e0;border-radius:9px;background:#fff"></div><div class="t" style="left:1955px;top:1712.55px;font-size:30.3px;color:#4a5878;font-weight:700;">Span Start</div><div class="t" style="left:1955px;top:1750.67px;font-size:33px;color:#4a5878;transform:scaleX(0.88);transform-origin:left center;">08-28-2019 15:33:00</div><div class="t" style="left:1955px;top:1790.07px;font-size:33px;color:#a4b0c4;transform:scaleX(0.88);transform-origin:left center;">1567031580699781</div><div style="left:2701.5px;top:1640px;width:120px;height:120px;border-radius:50%;background:#00aaff;box-shadow:0 2px 24px rgba(0,0,0,0.13)"></div><svg style="left:2725px;top:1660px" width="75" height="80" viewBox="2725 1660 75 80"><path d="M2742 1667.5 H2782 A8 8 0 0 1 2790 1675.5 V1732 L2772.5 1725.5 H2741 A7 7 0 0 1 2734 1718.5 V1675.5 A8 8 0 0 1 2742 1667.5 Z" fill="#fff"/><path d="M2743.5 1708.5 Q2762 1722 2780.5 1708.5" fill="none" stroke="#00aaff" stroke-width="4.4" stroke-linecap="round"/></svg>
</body></html>
